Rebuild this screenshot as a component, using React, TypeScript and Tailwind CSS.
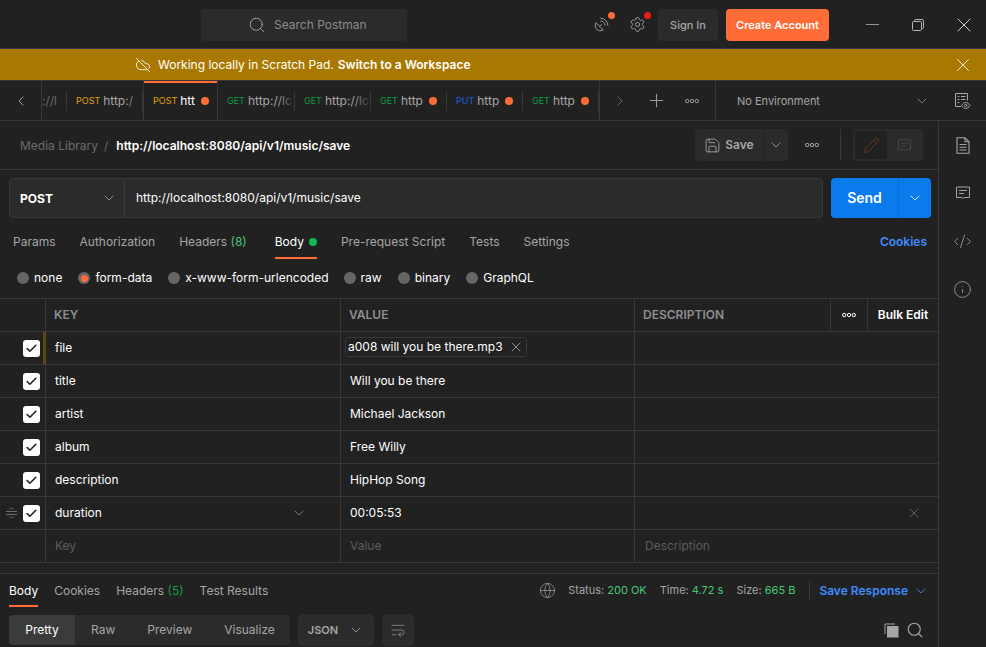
import {
  Check,
  ChevronDown,
  ChevronLeft,
  ChevronRight,
  CloudOff,
  CodeXml,
  Globe,
  Info,
  Minus,
  Pencil,
  Plus,
  SatelliteDish,
  Save,
  Search,
  Settings,
  WrapText,
  X,
} from "lucide-react";

const tabs = [
  { method: "POST", color: "text-[#e0a100]", url: "http:/", w: "w-[76px]" },
  { method: "POST", color: "text-[#e0a100]", url: "htt", w: "w-[75px]", active: true, dot: true },
  { method: "GET", color: "text-[#0f9d45]", url: "http://lc", w: "w-[77px]" },
  { method: "GET", color: "text-[#0f9d45]", url: "http://lo", w: "w-[76px]" },
  { method: "GET", color: "text-[#0f9d45]", url: "http", w: "w-[76px]", dot: true },
  { method: "PUT", color: "text-[#1f5fe0]", url: "http", w: "w-[76px]", dot: true },
  { method: "GET", color: "text-[#0f9d45]", url: "http", w: "w-[76px]", dot: true },
];

const rows = [
  { key: "file", file: "a008 will you be there.mp3" },
  { key: "title", value: "Will you be there" },
  { key: "artist", value: "Michael Jackson" },
  { key: "album", value: "Free Willy" },
  { key: "description", value: "HipHop Song" },
  { key: "duration", value: "00:05:53", hover: true },
];

const bodyTypes = [
  { label: "none", ml: "" },
  { label: "form-data", ml: "ml-[16px]" },
  { label: "x-www-form-urlencoded", ml: "ml-[16px]" },
  { label: "raw", ml: "ml-[15px]" },
  { label: "binary", ml: "ml-[16px]" },
  { label: "GraphQL", ml: "ml-[16px]" },
];

function Dots({ className }: { className?: string }) {
  return (
    <svg width="14" height="6" viewBox="0 0 14 6" fill="none" stroke="currentColor" className={className}>
      <circle cx="2.2" cy="3" r="1.7" />
      <circle cx="7" cy="3" r="1.7" />
      <circle cx="11.8" cy="3" r="1.7" />
    </svg>
  );
}

function Comment({ size = 16, className }: { size?: number; className?: string }) {
  return (
    <svg width={size} height={size} viewBox="0 0 16 16" fill="none" stroke="currentColor" strokeWidth="1" className={className}>
      <path d="M1.5 2h13v10.5H9l-1 1.2-1-1.2H1.5z" />
      <path d="M4 5.5h8M4 8.5h5" />
    </svg>
  );
}

function DocIcon() {
  return (
    <svg width="14" height="17" viewBox="0 0 14 17" fill="none" stroke="currentColor" strokeWidth="1.1">
      <path d="M1 .8h8l4 4V16.2H1z" />
      <path d="M9 .8v4h4M3.5 7.5h7M3.5 10.2h7M3.5 13h7" />
    </svg>
  );
}

function EnvQuickLook() {
  return (
    <svg width="17" height="17" viewBox="0 0 17 17" fill="none" stroke="currentColor" strokeWidth="1">
      <path d="M7 14.5H1.5v-13h12v7" />
      <path d="M3.5 4.5h2M7 4.5h4.5M3.5 7.5h2M7 7.5h4.5M3.5 10.5h2" />
      <path d="M7.5 13.5c1.2-2 2.7-3 4.2-3s3 1 4.3 3c-1.3 2-2.8 3-4.3 3s-3-1-4.2-3z" />
      <circle cx="11.7" cy="13.5" r="1.2" />
    </svg>
  );
}

function Restore() {
  return (
    <svg width="12" height="12" viewBox="0 0 12 12" fill="none" stroke="currentColor" strokeWidth="1">
      <rect x="0.5" y="2.5" width="9" height="9" rx="1" />
      <path d="M2.5 2.5V1.5a1 1 0 0 1 1-1h7a1 1 0 0 1 1 1v7a1 1 0 0 1-1 1h-1" />
    </svg>
  );
}

function DragHandle() {
  return (
    <svg width="11" height="12" viewBox="0 0 11 12" fill="none" stroke="currentColor" strokeWidth="1">
      <path d="M0 4.5h11M0 7.5h11M3.5 2.5 5.5 0.8l2 1.7M3.5 9.5l2 1.7 2-1.7" />
    </svg>
  );
}

function CopyFilled() {
  return (
    <svg width="15" height="15" viewBox="0 0 15 15" fill="none">
      <path d="M1 11V1h10" stroke="#a6a6a6" strokeWidth="1" />
      <rect x="3" y="3" width="11.5" height="11.5" fill="#a6a6a6" />
    </svg>
  );
}

function Checkbox() {
  return (
    <span className="flex h-[17px] w-[17px] items-center justify-center rounded-[3px] bg-white">
      <Check size={13} strokeWidth={3} className="text-[#212121]" />
    </span>
  );
}

function TabItem({ tab }: { tab: (typeof tabs)[number] }) {
  return (
    <div
      className={`relative flex h-full shrink-0 items-center overflow-hidden pl-[9px] pt-[1px] ${tab.w} ${
        tab.active ? "border-x border-[#383838] bg-[#212121]" : ""
      }`}
    >
      {tab.active && <div className="absolute inset-x-0 top-0 h-[2px] bg-[#ff6c37]" />}
      <span className={`text-[9px] ${tab.color}`}>{tab.method}</span>
      <span className={`ml-[3px] whitespace-nowrap text-[12px] ${tab.active ? "text-white" : "text-[#a6a6a6]"}`}>{tab.url}</span>
      {tab.dot && <span className="ml-[6px] h-2 w-2 shrink-0 rounded-full bg-[#ff6c37]" />}
      {!tab.active && !tab.dot && <div className="absolute inset-y-0 right-0 w-[18px] bg-gradient-to-r from-transparent to-[#212121]" />}
      {!tab.active && <div className="absolute right-0 top-[10px] h-[20px] w-px bg-[#383838]" />}
    </div>
  );
}

function ParamRow({ row }: { row: (typeof rows)[number] }) {
  return (
    <div className="grid h-[33px] grid-cols-[46px_295px_294px_1fr] border-b border-[#383838] text-[12px] text-white">
      <div className="relative flex items-center justify-end border-r border-[#383838] pr-[5px]">
        {row.hover && (
          <span className="absolute left-[6px] text-[#6b6b6b]">
            <DragHandle />
          </span>
        )}
        <Checkbox />
        {row.file && <div className="absolute -right-px top-0 h-full w-[3px] bg-[#5c4a10]" />}
      </div>
      <div className="flex items-center justify-between border-r border-[#383838] pl-[9px] pr-[33px]">
        <span>{row.key}</span>
        {row.hover && <ChevronDown size={16} strokeWidth={1.25} className="text-[#8a8a8a]" />}
      </div>
      <div className="flex items-center border-r border-[#383838] pl-[9px]">
        {row.file ? (
          <span className="-ml-[5px] -mt-[3px] flex h-[20px] items-center gap-[5px] rounded-[3px] border border-[#383838] pl-[2px] pr-[2px]">
            {row.file}
            <X size={16} strokeWidth={1.25} className="text-[#a6a6a6]" />
          </span>
        ) : (
          row.value
        )}
      </div>
      <div className="flex items-center justify-end pr-[16px]">
        {row.hover && <X size={16} strokeWidth={1.25} className="text-[#6b6b6b]" />}
      </div>
    </div>
  );
}

export default function App() {
  return (
    <div className="flex h-screen w-full flex-col overflow-hidden bg-[#212121] font-['Inter',sans-serif] text-[12px] text-[#a6a6a6]">
      {/* title bar */}
      <div className="relative flex h-[49px] shrink-0 items-center border-b border-[#383838] pt-[1px]">
        <div className="ml-[201px] flex h-[32px] w-[206px] items-center rounded-[4px] bg-[#2b2b2b] pl-[47px] text-[12px] text-[#8c8c8c]">
          <Search size={18} strokeWidth={1.25} className="mr-[8px] text-[#a6a6a6]" />
          <span className="pt-[1px]">Search Postman</span>
        </div>
        <div className="ml-auto flex items-center">
          <span className="relative mr-[19px] text-[#a6a6a6]">
            <SatelliteDish size={17} strokeWidth={1.25} />
            <span className="absolute -right-[5px] -top-[4px] h-[7px] w-[7px] rounded-full bg-[#ff6c37]" />
          </span>
          <span className="relative mr-[12px] text-[#a6a6a6]">
            <Settings size={17} strokeWidth={1.25} />
            <span className="absolute -right-[5px] -top-[4px] h-[7px] w-[7px] rounded-full bg-[#eb2013]" />
          </span>
          <div className="flex h-[32px] w-[60px] items-center justify-center rounded-[4px] bg-[#2b2b2b] pt-[1px] text-[11px] font-medium text-[#a6a6a6]">
            Sign In
          </div>
          <div className="ml-2 flex h-[32px] w-[103px] items-center justify-center rounded-[4px] bg-[#ff6c37] pt-[1px] text-[11px] font-semibold text-white">
            Create Account
          </div>
          <Minus size={21} strokeWidth={0.9} className="ml-[33px] text-[#b5b5b5]" />
          <span className="ml-[29px] text-[#b5b5b5]">
            <Restore />
          </span>
          <X size={24} strokeWidth={1} className="ml-[28px] mr-[10px] text-[#d0d0d0]" />
        </div>
      </div>

      {/* scratch pad banner */}
      <div className="flex h-[31px] shrink-0 items-center bg-[#a97800] pl-[135px] text-[12px] text-white">
        <CloudOff size={16} strokeWidth={1.25} className="mr-[7px]" />
        <span>Working locally in Scratch Pad.</span>
        <span className="ml-1 font-semibold">Switch to a Workspace</span>
        <X size={22} strokeWidth={0.9} className="ml-auto mr-[12px]" />
      </div>

      {/* tabs */}
      <div className="flex h-[41px] shrink-0 border-y border-[#383838]">
        <div className="flex w-[42px] shrink-0 items-center justify-center border-r border-[#383838]">
          <ChevronLeft size={16} strokeWidth={1.5} />
        </div>
        <div className="relative flex w-[25px] shrink-0 items-center overflow-hidden border-r-0 text-[#6b6b6b]">
          <span>://l</span>
          <div className="absolute right-0 top-[10px] h-[20px] w-px bg-[#383838]" />
        </div>
        {tabs.map((tab, i) => (
          <TabItem key={i} tab={tab} />
        ))}
        <div className="flex w-[117px] shrink-0 items-center border-x border-[#383838] text-[#9a9a9a]">
          <ChevronRight size={16} strokeWidth={1} className="ml-[12px] text-[#8a8a8a]" />
          <Plus size={21} strokeWidth={1.25} className="ml-[18px]" />
          <Dots className="ml-[18px]" />
        </div>
        <div className="flex w-[222px] shrink-0 items-center justify-between pl-[21px] pr-[8px] pt-[1px] text-[11px]">
          No Environment
          <ChevronDown size={16} strokeWidth={1} />
        </div>
        <div className="flex flex-1 items-center justify-center">
          <EnvQuickLook />
        </div>
      </div>

      <div className="flex min-h-0 flex-1">
        <div className="flex min-w-0 flex-1 flex-col">
          {/* request header */}
          <div className="flex h-[49px] shrink-0 items-center border-b border-[#383838] pl-[20px] pr-[15px]">
            <span className="pt-[1px] text-[#6b6b6b]">Media Library</span>
            <span className="ml-[6px] mr-[8px] pt-[1px] text-[#6b6b6b]">/</span>
            <span className="pt-[1px] font-semibold text-white">http://localhost:8080/api/v1/music/save</span>
            <div className="ml-auto flex h-[32px] w-[68px] items-center justify-center gap-[4px] rounded-l-[4px] bg-[#2b2b2b] font-semibold">
              <Save size={17} strokeWidth={1.25} />
              Save
            </div>
            <div className="ml-px flex h-[32px] w-[24px] items-center justify-center rounded-r-[4px] bg-[#2b2b2b]">
              <ChevronDown size={16} strokeWidth={1.25} />
            </div>
            <Dots className="ml-[17px]" />
            <div className="ml-[21px] h-[32px] w-px bg-[#383838]" />
            <div className="ml-[12px] flex h-[32px] w-[70px] items-center rounded-[4px] bg-[#2b2b2b] p-[2px]">
              <div className="flex h-[28px] w-[32px] items-center justify-center rounded-[3px] bg-[#212121] text-[#6e3a26]">
                <Pencil size={17} strokeWidth={1.25} />
              </div>
              <div className="flex flex-1 items-center justify-center text-[#4a4a4a]">
                <Comment size={15} />
              </div>
            </div>
          </div>

          {/* url bar */}
          <div className="flex shrink-0 pl-[9px] pr-[7px] pt-[8px]">
            <div className="flex h-[40px] w-[116px] items-center justify-between rounded-l-[4px] border border-[#383838] bg-[#2b2b2b] pl-[10px] pr-[7px] text-[12px] font-bold text-white">
              <span className="pt-[1px]">POST</span>
              <ChevronDown size={16} strokeWidth={1.25} className="text-[#a6a6a6]" />
            </div>
            <div className="flex h-[40px] flex-1 items-center rounded-r-[4px] border border-l-0 border-[#383838] bg-[#2b2b2b] pl-[11px] text-white">
              http://localhost:8080/api/v1/music/save
            </div>
            <div className="ml-2 flex h-[40px] w-[68px] items-center justify-center rounded-l-[4px] border-r border-[#0a6fd6] bg-[#097bed] pb-[1px] text-[14px] font-semibold text-white">
              Send
            </div>
            <div className="flex h-[40px] w-[32px] items-center justify-center rounded-r-[4px] bg-[#097bed] text-white">
              <ChevronDown size={16} strokeWidth={1.25} />
            </div>
          </div>

          {/* request tabs */}
          <div className="flex h-[40px] shrink-0 items-center pl-[13px] pr-[11px] pt-[8px]">
            <span>Params</span>
            <span className="ml-[24px]">Authorization</span>
            <span className="ml-[24px]">
              Headers <span className="text-[#48c774]">(8)</span>
            </span>
            <span className="relative ml-[28px] flex items-center text-white">
              Body
              <span className="ml-[5px] h-2 w-2 rounded-full bg-[#0cbb52]" />
              <span className="absolute inset-x-0 -bottom-[8px] h-[2px] bg-[#ff6c37]" />
            </span>
            <span className="ml-[24px]">Pre-request Script</span>
            <span className="ml-[24px]">Tests</span>
            <span className="ml-[24px]">Settings</span>
            <span className="ml-auto font-semibold text-[#3f8cff]">Cookies</span>
          </div>

          {/* body type */}
          <div className="flex h-[41px] shrink-0 items-center pb-[1px] pl-[17px] text-white">
            {bodyTypes.map((t) => (
              <span key={t.label} className={`flex items-center gap-[5px] ${t.ml}`}>
                <span className="flex h-3 w-3 items-center justify-center rounded-full bg-[#666666]">
                  {t.label === "form-data" && <span className="h-[7px] w-[7px] rounded-full bg-[#ff6c37]" />}
                </span>
                {t.label}
              </span>
            ))}
          </div>

          {/* params table */}
          <div className="mt-[-1px] shrink-0 border-y border-[#383838]">
            <div className="grid h-[32px] grid-cols-[46px_295px_294px_196px_37px_1fr] items-stretch text-[12px] font-semibold text-[#8f8f8f]">
              <div className="border-r border-[#383838]" />
              <div className="flex items-center border-r border-[#383838] pl-[8px]">KEY</div>
              <div className="flex items-center border-r border-[#383838] pl-[8px]">VALUE</div>
              <div className="flex items-center border-r border-[#383838] pl-[8px]">DESCRIPTION</div>
              <div className="flex items-center justify-center border-r border-[#383838] text-white">
                <Dots />
              </div>
              <div className="flex items-center justify-center text-white">Bulk Edit</div>
            </div>
          </div>
          {rows.map((row) => (
            <ParamRow key={row.key} row={row} />
          ))}
          <div className="grid h-[33px] shrink-0 grid-cols-[46px_295px_294px_1fr] border-b border-[#383838] text-[#5c5c5c]">
            <div className="border-r border-[#383838]" />
            <div className="flex items-center border-r border-[#383838] pb-[1px] pl-[9px]">Key</div>
            <div className="flex items-center border-r border-[#383838] pb-[1px] pl-[9px]">Value</div>
            <div className="flex items-center pb-[1px] pl-[10px]">Description</div>
          </div>

          {/* response */}
          <div className="mt-[10px] flex-1 border-t border-[#383838]">
            <div className="flex h-[33px] items-center pl-[9px] pr-[9px]">
              <span className="relative text-white">
                Body
                <span className="absolute inset-x-0 -bottom-[7px] h-[2px] bg-[#ff6c37]" />
              </span>
              <span className="ml-[16px]">Cookies</span>
              <span className="ml-[16px]">
                Headers <span className="text-[#0f9d45]">(5)</span>
              </span>
              <span className="ml-[16px]">Test Results</span>
              <Globe size={17} strokeWidth={1} className="ml-auto text-[#a6a6a6]" />
              <span className="ml-[12px] text-[11px]">
                Status: <span className="text-[#48c774]">200 OK</span>
              </span>
              <span className="ml-[13px] text-[11px]">
                Time: <span className="text-[#48c774]">4.72 s</span>
              </span>
              <span className="ml-[13px] text-[11px]">
                Size: <span className="text-[#48c774]">665 B</span>
              </span>
              <div className="ml-[14px] h-[20px] w-px bg-[#383838]" />
              <span className="ml-[9px] font-semibold text-[#3f8cff]">Save Response</span>
              <ChevronDown size={16} strokeWidth={1.25} className="ml-[5px] text-[#3f8cff]" />
            </div>
            <div className="mt-[7px] flex items-center pl-[9px] pr-[14px]">
              <div className="flex h-[30px] w-[281px] items-center rounded-[4px] bg-[#2b2b2b]">
                <span className="flex h-full w-[66px] items-center justify-center rounded-l-[4px] bg-[#3b3b3b] text-white">Pretty</span>
                <span className="ml-[16px]">Raw</span>
                <span className="ml-[32px]">Preview</span>
                <span className="ml-[32px]">Visualize</span>
              </div>
              <div className="ml-2 flex h-[32px] w-[76px] items-center justify-center gap-[10px] rounded-[4px] bg-[#2b2b2b] text-[11px] font-semibold">
                JSON
                <ChevronDown size={16} strokeWidth={1.25} />
              </div>
              <div className="ml-2 flex h-[32px] w-[32px] items-center justify-center rounded-[4px] bg-[#2b2b2b]">
                <WrapText size={16} strokeWidth={1} />
              </div>
              <span className="ml-auto">
                <CopyFilled />
              </span>
              <Search size={18} strokeWidth={1.5} className="ml-[7px]" />
            </div>
          </div>
        </div>

        {/* right sidebar */}
        <div className="flex w-[48px] shrink-0 flex-col items-center gap-[32px] border-l border-[#383838] pt-[16px]">
          <div className="flex h-4 items-center">
            <DocIcon />
          </div>
          <div className="flex h-4 items-center">
            <Comment />
          </div>
          <div className="flex h-4 items-center">
            <CodeXml size={19} strokeWidth={1} />
          </div>
          <div className="flex h-4 items-center">
            <Info size={19} strokeWidth={1} />
          </div>
        </div>
      </div>
    </div>
  );
}
